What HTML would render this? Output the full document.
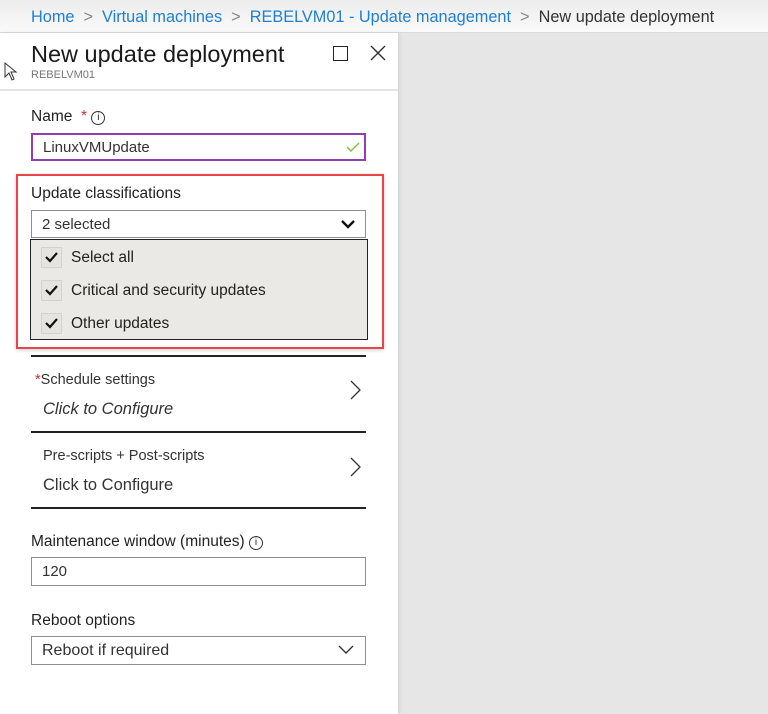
<!DOCTYPE html>
<html><head><meta charset="utf-8"><style>
*{margin:0;padding:0;box-sizing:border-box}
body{width:768px;height:714px;overflow:hidden;background:#e6e6e6;font-family:"Liberation Sans",sans-serif;color:#262626;position:relative}
.a{position:absolute;white-space:nowrap}
.bc{left:0;top:0;width:768px;height:33px;background:linear-gradient(#ececec,#fafafa);border-bottom:1px solid #dadada}
.panel{left:0;top:33px;width:398px;height:681px;background:#fff;box-shadow:2px 0 4px rgba(0,0,0,.08)}
.lbl{font-size:15.5px;color:#222;line-height:20px}
.box{border:1px solid #8f8f8f;background:#fff;height:28px;font-size:15px;line-height:27px;padding-left:10px;color:#333}
.ck{width:21px;height:21px;border:1px solid #d4d2cf;background:#e6e4e1}
.it{font-size:15.5px;line-height:20px;color:#222}
.hr{height:2px;background:#222;left:31px;width:335px}
.inf{display:inline-block;width:14px;height:14px;border:1.3px solid #333;border-radius:50%;font-size:10px;line-height:12px;text-align:center;vertical-align:1px}
</style></head><body>
<div class="a bc"></div>
<div class="a" style="left:31px;top:7px;font-size:16.3px;line-height:20px;color:#1f7fd0">Home <span style="color:#888">&nbsp;&gt;&nbsp;</span> Virtual machines <span style="color:#888">&nbsp;&gt;&nbsp;</span> REBELVM01 - Update management <span style="color:#888">&nbsp;&gt;&nbsp;</span> <span style="color:#333">New update deployment</span></div>
<div class="a panel"></div>
<div class="a" style="left:0;top:89px;width:398px;height:2px;background:#e3e3e3"></div>
<div class="a" style="left:31px;top:40px;font-size:23.5px;line-height:28px;color:#1a1a1a">New update deployment</div>
<div class="a" style="left:31px;top:68px;font-size:11px;line-height:14px;color:#777">REBELVM01</div>
<div class="a" style="left:333px;top:46px;width:15px;height:15px;border:1.5px solid #222"></div>
<svg class="a" style="left:370px;top:45px" width="16" height="16"><path d="M1 1L15 15M15 1L1 15" stroke="#333" stroke-width="1.4"/></svg>
<svg class="a" style="left:4px;top:62px" width="16" height="20"><path d="M1 1V15L5 11L8 18L10 17L7 10H12Z" fill="#fff" stroke="#333" stroke-width="1"/></svg>

<div class="a lbl" style="left:31px;top:107px">Name <span style="color:#c33">&nbsp;*</span> <span class="inf">i</span></div>
<div class="a box" style="left:31px;top:133px;width:335px;border:2px solid #8e3fb5;line-height:25px">LinuxVMUpdate</div>
<svg class="a" style="left:346px;top:141px" width="14" height="12"><path d="M1 6L5 10L13 2" fill="none" stroke="#7bbf3a" stroke-width="1.4"/></svg>

<div class="a" style="left:16px;top:174px;width:368px;height:175px;border:2px solid #e8454a;box-shadow:0 1px 4px rgba(0,0,0,.2)"></div>
<div class="a lbl" style="left:31px;top:184px">Update classifications</div>
<div class="a box" style="left:31px;top:210px;width:335px">2 selected</div>
<svg class="a" style="left:341px;top:219px" width="14" height="10"><path d="M1 2L7 8L13 2" fill="none" stroke="#111" stroke-width="2.4"/></svg>
<div class="a" style="left:30px;top:239px;width:338px;height:101px;background:#ebe9e6;border:1px solid #222"></div>
<div class="a ck" style="left:41px;top:247px"></div>
<div class="a ck" style="left:41px;top:280px"></div>
<div class="a ck" style="left:41px;top:313px"></div>
<svg class="a" style="left:41px;top:247px" width="22" height="90"><path d="M5 10L9 14L16 6M5 43L9 47L16 39M5 76L9 80L16 72" fill="none" stroke="#111" stroke-width="2.2"/></svg>
<div class="a it" style="left:71px;top:248px">Select all</div>
<div class="a it" style="left:71px;top:281px">Critical and security updates</div>
<div class="a it" style="left:71px;top:314px">Other updates</div>

<div class="a hr" style="top:355px"></div>
<div class="a" style="left:35px;top:371px;font-size:14.5px;line-height:18px;color:#333"><span style="color:#b33">*</span>Schedule settings</div>
<div class="a" style="left:43px;top:399px;font-size:16.5px;line-height:20px;font-style:italic;color:#333">Click to Configure</div>
<svg class="a" style="left:350px;top:380px" width="12" height="20"><path d="M1 1L10 10L1 19" fill="none" stroke="#333" stroke-width="1.3"/></svg>
<div class="a hr" style="top:431px"></div>
<div class="a" style="left:43px;top:447px;font-size:14.5px;line-height:18px;color:#333">Pre-scripts + Post-scripts</div>
<div class="a" style="left:43px;top:475px;font-size:16.5px;line-height:20px;color:#333">Click to Configure</div>
<svg class="a" style="left:350px;top:457px" width="12" height="20"><path d="M1 1L10 10L1 19" fill="none" stroke="#333" stroke-width="1.3"/></svg>
<div class="a hr" style="top:507px"></div>

<div class="a lbl" style="left:31px;top:532px">Maintenance window (minutes) <span class="inf">i</span></div>
<div class="a box" style="left:31px;top:557px;width:335px;height:29px">120</div>
<div class="a lbl" style="left:31px;top:611px">Reboot options</div>
<div class="a box" style="left:31px;top:636px;width:335px;height:29px;font-size:16px">Reboot if required</div>
<svg class="a" style="left:338px;top:645px" width="16" height="10"><path d="M1 1L8 8L15 1" fill="none" stroke="#333" stroke-width="1.4"/></svg>
</body></html>
